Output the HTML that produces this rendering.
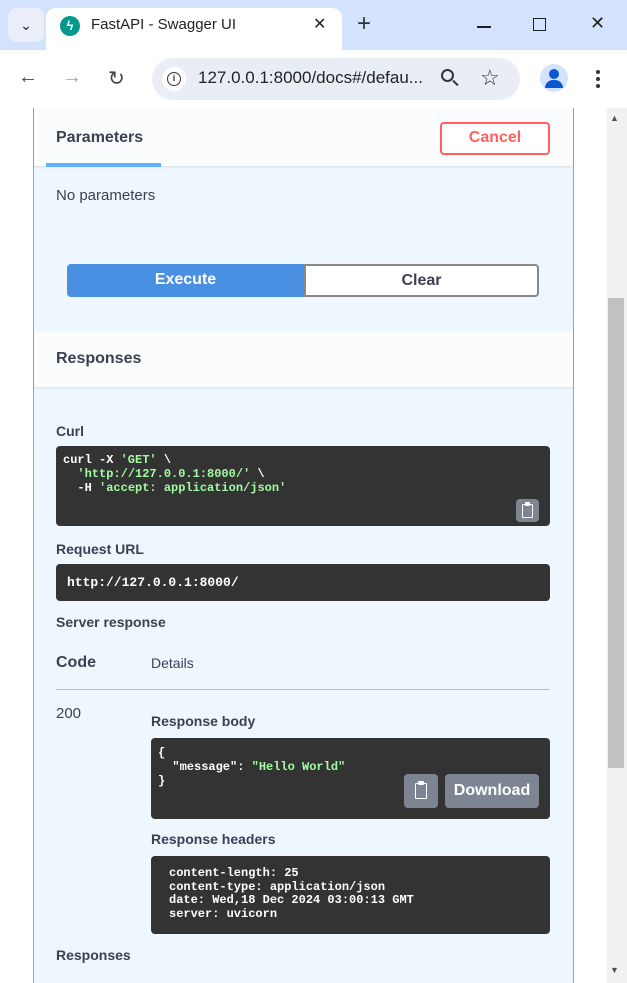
<!DOCTYPE html>
<html><head><meta charset="utf-8"><style>
*{box-sizing:border-box;margin:0;padding:0}
body{width:627px;height:983px;overflow:hidden;background:#fff;font-family:"Liberation Sans",sans-serif;position:relative;color:#3b4151}
.a{position:absolute}
.mono{font-family:"Liberation Mono",monospace;font-weight:bold;font-size:12px;line-height:14px;color:#fff;white-space:pre}
.b{font-weight:bold;font-size:14px;color:#3b4151}
.code{background:#333;border-radius:4px}
.g{color:#a2fca2}
.clip{background:#7d8492;border-radius:4px}
.clip i{position:absolute;border:1.5px solid #fff;border-radius:1px}
</style></head><body>
<!-- tab strip -->
<div class="a" style="left:0;top:0;width:627px;height:50px;background:#d3e3fd"></div>
<div class="a" style="left:8px;top:8px;width:36px;height:34px;background:#e9eef8;border-radius:8px;font-size:14px;text-align:center;line-height:34px;color:#222">⌄</div>
<div class="a" style="left:46px;top:8px;width:296px;height:42px;background:#fff;border-radius:10px 10px 0 0"></div>
<div class="a" style="left:60px;top:16px;width:20px;height:20px;border-radius:50%;background:#05998b;color:#fff;font-size:13px;text-align:center;line-height:20px;font-weight:bold">ϟ</div>
<div class="a" style="left:91px;top:16px;font-size:15px;color:#222">FastAPI - Swagger UI</div>
<div class="a" style="left:313px;top:14px;font-size:16px;color:#222">✕</div>
<div class="a" style="left:357px;top:10px;font-size:24px;color:#333">+</div>
<div class="a" style="left:477px;top:26px;width:14px;height:1.5px;background:#222"></div>
<div class="a" style="left:533px;top:18px;width:13px;height:13px;border:1.5px solid #222"></div>
<div class="a" style="left:590px;top:13px;font-size:18px;color:#222">✕</div>
<!-- toolbar -->
<div class="a" style="left:0;top:50px;width:627px;height:58px;background:#fff;border-radius:8px 8px 0 0"></div>
<div class="a" style="left:18px;top:66px;font-size:20px;color:#444">←</div>
<div class="a" style="left:62px;top:66px;font-size:20px;color:#aaa">→</div>
<div class="a" style="left:108px;top:66px;font-size:20px;color:#444">↻</div>
<div class="a" style="left:152px;top:58px;width:368px;height:42px;background:#e9eef6;border-radius:21px"></div>
<div class="a" style="left:162px;top:67px;width:24px;height:24px;background:#fff;border-radius:50%"></div>
<div class="a" style="left:167px;top:72px;width:14px;height:14px;border:1.7px solid #333;border-radius:50%;font-size:9px;font-weight:bold;text-align:center;line-height:11px;color:#333">i</div>
<div class="a" style="left:198px;top:68px;font-size:17px;color:#222">127.0.0.1:8000/docs#/defau...</div>
<div class="a" style="left:441px;top:69px;width:13px;height:13px;border:2px solid #333;border-radius:50%"></div>
<div class="a" style="left:452px;top:82px;width:7px;height:2px;background:#333;transform:rotate(45deg)"></div>
<div class="a" style="left:480px;top:65px;font-size:22px;color:#333">☆</div>
<div class="a" style="left:540px;top:64px;width:28px;height:28px;border-radius:50%;background:#d3e3fd"></div>
<div class="a" style="left:549px;top:69px;width:10px;height:10px;border-radius:50%;background:#0b57d0"></div>
<div class="a" style="left:545px;top:80px;width:18px;height:8px;border-radius:9px 9px 0 0;background:#0b57d0"></div>
<div class="a" style="left:596px;top:70px;width:4px;height:4px;border-radius:50%;background:#333;box-shadow:0 7px 0 #333,0 14px 0 #333"></div>
<!-- scrollbar -->
<div class="a" style="left:607px;top:108px;width:20px;height:875px;background:#f1f1f1"></div>
<div class="a" style="left:608px;top:298px;width:16px;height:470px;background:#c1c1c1"></div>
<div class="a" style="left:610px;top:113px;font-size:9px;color:#505050">▲</div>
<div class="a" style="left:610px;top:965px;font-size:9px;color:#505050">▼</div>
<!-- panel -->
<div class="a" style="left:33px;top:108px;width:541px;height:875px;background:#eff7fe;border-left:1px solid #61affe;border-right:1px solid #61affe"></div>
<div class="a" style="left:34px;top:108px;width:539px;height:58px;background:#fafcfe;box-shadow:0 1px 2px rgba(0,0,0,.1)"></div>
<div class="a b" style="left:56px;top:129px;font-size:16px">Parameters</div>
<div class="a" style="left:46px;top:163px;width:115px;height:4px;background:#61affe"></div>
<div class="a" style="left:440px;top:122px;width:110px;height:33px;border:2px solid #ff6060;border-radius:4px;color:#ff6060;font-weight:bold;font-size:16px;text-align:center;line-height:28px;background:#fff">Cancel</div>
<div class="a" style="left:56px;top:187px;font-size:15px;color:#3b4151">No parameters</div>
<div class="a" style="left:67px;top:264px;width:237px;height:33px;background:#4990e2;border-radius:4px 0 0 4px;color:#fff;font-weight:bold;font-size:16px;text-align:center;line-height:32px">Execute</div>
<div class="a" style="left:304px;top:264px;width:235px;height:33px;border:2px solid #888;border-radius:0 4px 4px 0;background:#fff;font-weight:bold;font-size:16px;text-align:center;line-height:29px;color:#3b4151">Clear</div>
<div class="a" style="left:34px;top:331px;width:539px;height:56px;background:#fafcfe;box-shadow:0 1px 2px rgba(0,0,0,.1)"></div>
<div class="a b" style="left:56px;top:350px;font-size:16px">Responses</div>
<div class="a b" style="left:56px;top:423px">Curl</div>
<div class="a code" style="left:56px;top:446px;width:494px;height:80px"></div>
<div class="a mono" style="left:63px;top:453px">curl -X <span class="g">'GET'</span> \
  <span class="g">'http://127.0.0.1:8000/'</span> \
  -H <span class="g">'accept: application/json'</span></div>
<div class="a clip" style="left:516px;top:499px;width:23px;height:23px"><i style="left:6px;top:5px;width:11px;height:14px"></i><i style="left:9px;top:3px;width:5px;height:4px;background:#fff"></i></div>
<div class="a b" style="left:56px;top:541px">Request URL</div>
<div class="a code" style="left:56px;top:564px;width:494px;height:37px"></div>
<div class="a mono" style="left:67px;top:576px;font-size:13px">http://127.0.0.1:8000/</div>
<div class="a b" style="left:56px;top:614px">Server response</div>
<div class="a b" style="left:56px;top:654px;font-size:16px">Code</div>
<div class="a" style="left:151px;top:655px;font-size:14px;color:#3b4151">Details</div>
<div class="a" style="left:56px;top:689px;width:494px;height:1px;background:#bbb"></div>
<div class="a" style="left:56px;top:705px;font-size:15px;color:#3b4151">200</div>
<div class="a b" style="left:151px;top:713px">Response body</div>
<div class="a code" style="left:151px;top:738px;width:399px;height:81px"></div>
<div class="a mono" style="left:158px;top:746px">{
  "message": <span class="g">"Hello World"</span>
}</div>
<div class="a clip" style="left:404px;top:774px;width:34px;height:34px"><i style="left:11px;top:9px;width:12px;height:16px"></i><i style="left:14px;top:7px;width:6px;height:4px;background:#fff"></i></div>
<div class="a" style="left:445px;top:774px;width:94px;height:34px;background:#7d8492;border-radius:4px;color:#fff;font-weight:bold;font-size:16px;text-align:center;line-height:33px">Download</div>
<div class="a b" style="left:151px;top:831px">Response headers</div>
<div class="a code" style="left:151px;top:856px;width:399px;height:78px"></div>
<div class="a mono" style="left:169px;top:867px;line-height:13.5px">content-length: 25
content-type: application/json
date: Wed,18 Dec 2024 03:00:13 GMT
server: uvicorn</div>
<div class="a b" style="left:56px;top:947px">Responses</div>
</body></html>
